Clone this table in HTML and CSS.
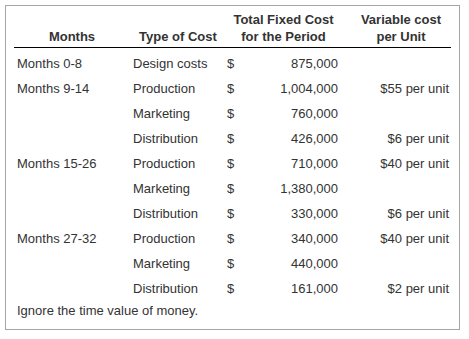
FILE: index.html
```html
<!DOCTYPE html>
<html lang="en">
<head>
    <meta charset="UTF-8">
    <meta name="viewport" content="width=device-width, initial-scale=1.0">
    <title>Cost Schedule</title>
    <link rel="stylesheet" href="styles.css">
</head>
<body>
    <div class="card">
        <table class="costs">
            <colgroup>
                <col class="col-months">
                <col class="col-type">
                <col class="col-fixed">
                <col class="col-variable">
            </colgroup>
            <thead>
                <tr>
                    <th>Months</th>
                    <th>Type of Cost</th>
                    <th>Total Fixed Cost<br>for the Period</th>
                    <th class="var-head">Variable cost<br>per Unit</th>
                </tr>
            </thead>
            <tbody>
                <tr>
                    <td class="month">Months 0-8</td>
                    <td class="type">Design costs</td>
                    <td class="fixed"><span class="dollar">$</span>875,000</td>
                    <td class="variable"></td>
                </tr>
                <tr>
                    <td class="month">Months 9-14</td>
                    <td class="type">Production</td>
                    <td class="fixed"><span class="dollar">$</span>1,004,000</td>
                    <td class="variable">$55 per unit</td>
                </tr>
                <tr>
                    <td class="month"></td>
                    <td class="type">Marketing</td>
                    <td class="fixed"><span class="dollar">$</span>760,000</td>
                    <td class="variable"></td>
                </tr>
                <tr>
                    <td class="month"></td>
                    <td class="type">Distribution</td>
                    <td class="fixed"><span class="dollar">$</span>426,000</td>
                    <td class="variable">$6 per unit</td>
                </tr>
                <tr>
                    <td class="month">Months 15-26</td>
                    <td class="type">Production</td>
                    <td class="fixed"><span class="dollar">$</span>710,000</td>
                    <td class="variable">$40 per unit</td>
                </tr>
                <tr>
                    <td class="month"></td>
                    <td class="type">Marketing</td>
                    <td class="fixed"><span class="dollar">$</span>1,380,000</td>
                    <td class="variable"></td>
                </tr>
                <tr>
                    <td class="month"></td>
                    <td class="type">Distribution</td>
                    <td class="fixed"><span class="dollar">$</span>330,000</td>
                    <td class="variable">$6 per unit</td>
                </tr>
                <tr>
                    <td class="month">Months 27-32</td>
                    <td class="type">Production</td>
                    <td class="fixed"><span class="dollar">$</span>340,000</td>
                    <td class="variable">$40 per unit</td>
                </tr>
                <tr>
                    <td class="month"></td>
                    <td class="type">Marketing</td>
                    <td class="fixed"><span class="dollar">$</span>440,000</td>
                    <td class="variable"></td>
                </tr>
                <tr>
                    <td class="month"></td>
                    <td class="type">Distribution</td>
                    <td class="fixed"><span class="dollar">$</span>161,000</td>
                    <td class="variable">$2 per unit</td>
                </tr>
            </tbody>
        </table>
        <p class="note">Ignore the time value of money.</p>
    </div>
</body>
</html>
```

FILE: styles.css
```css
body {
    font-family: "Liberation Sans", Arial, sans-serif;
    font-size: 13px;
    color: #333;
    background-color: #fff;
    margin: 0;
    padding: 5px;
}
.card {
    width: 455px;
    box-sizing: border-box;
    border: 1px solid #a6a6a6;
    padding: 5px 8px 8px 8px;
}
.costs {
    width: 437px;
    table-layout: fixed;
    border-collapse: separate;
    border-spacing: 0;
}
.col-months {
    width: 116px;
}
.col-type {
    width: 96px;
}
.col-fixed {
    width: 115px;
}
.col-variable {
    width: 110px;
}
.costs th {
    font-weight: bold;
    line-height: 17px;
    text-align: center;
    vertical-align: bottom;
    padding: 0 0 2px 0;
    border-bottom: 1px solid #000;
}
.costs th.var-head {
    padding-left: 10px;
}
.costs td {
    line-height: 25px;
    padding: 0;
    white-space: nowrap;
}
.costs tbody tr:first-child td {
    padding-top: 3px;
}
.month {
    padding-left: 3px !important;
}
.type {
    padding-left: 3px !important;
}
.fixed {
    text-align: right;
    padding-left: 1px !important;
    padding-right: 3px !important;
}
.dollar {
    float: left;
}
.variable {
    text-align: right;
    padding-right: 2px !important;
}
.note {
    margin: 0;
    line-height: 20px;
    padding-left: 3px;
}
```
